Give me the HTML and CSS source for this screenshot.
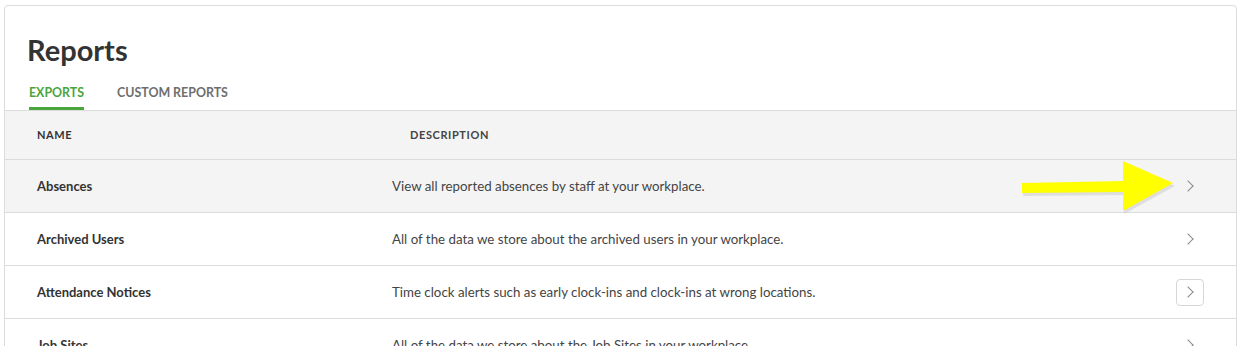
FILE: index.html
```html
<!DOCTYPE html>
<html>
<head>
<meta charset="UTF-8">
<title>Reports</title>
<link rel="stylesheet" href="styles.css">
</head>
<body>

	<div class="card">
		<div class="card-head">
			<h1 class="title">Reports</h1>
			<div class="tabs">
				<a class="tab active" href="#">Exports</a>
				<a class="tab" href="#">Custom Reports</a>
			</div>
		</div>

		<div class="table">
			<div class="row head">
				<div class="col-name">Name</div>
				<div class="col-desc">Description</div>
			</div>

			<div class="row hover">
				<div class="col-name">Absences</div>
				<div class="col-desc">View all reported absences by staff at your workplace.</div>
				<div class="col-go"><span class="chev"></span></div>
			</div>
			<div class="row">
				<div class="col-name">Archived Users</div>
				<div class="col-desc">All of the data we store about the archived users in your workplace.</div>
				<div class="col-go"><span class="chev"></span></div>
			</div>
			<div class="row">
				<div class="col-name">Attendance Notices</div>
				<div class="col-desc">Time clock alerts such as early clock-ins and clock-ins at wrong locations.</div>
				<div class="col-go"><span class="chev boxed"></span></div>
			</div>
			<div class="row">
				<div class="col-name">Job Sites</div>
				<div class="col-desc">All of the data we store about the Job Sites in your workplace.</div>
				<div class="col-go"><span class="chev"></span></div>
			</div>
		</div>
	</div>

	<!-- annotation arrow drawn over the first row -->
	<svg class="pointer" width="170" height="60" viewBox="0 0 170 60">
		<polygon points="3,23 104,21 104,1 155,23 104,51 104,32 3,33" fill="#cfcfcf" transform="translate(1,2)" opacity="0.6"/>
		<polygon points="3,22 104,20 104,0 154,22 104,50 104,31 3,32" fill="#ffff00"/>
	</svg>

</body>
</html>
```
FILE: styles.css
```css
body {
	margin: 0;
	padding: 5px 13px 0 4px;
	font-family: Lato, "Noto Sans", sans-serif;
	color: #333;
	background: #fff;
	overflow: hidden;
}

.card {
	border: 1px solid #dcdcdc;
	border-radius: 4px;
	background: #fff;
}

.card-head {
	padding: 0 22px;
}

.title {
	margin: 0;
	padding-top: 26px;
	font-size: 29px;
	font-weight: 700;
	color: #333;
	line-height: 35px;
}

.tabs {
	display: flex;
	gap: 33px;
	margin-top: 18px;
	padding-left: 2px;
}

.tab {
	font-size: 12.4px;
	font-weight: 700;
	text-transform: uppercase;
	color: #6e6e6e;
	text-decoration: none;
	padding-bottom: 7px;
	border-bottom: 3px solid transparent;
}

.tab.active {
	color: #4aa63c;
	border-bottom-color: #4aa63c;
}

.table {
	border-top: 1px solid #dcdcdc;
}

.row {
	display: flex;
	align-items: center;
	height: 52px;
	border-bottom: 1px solid #dcdcdc;
	font-size: 13px;
}

.row.head {
	height: 49px;
	padding-bottom: 2px;
	box-sizing: border-box;
	background: #f4f4f4;
	font-size: 11px;
	font-weight: 700;
	text-transform: uppercase;
	letter-spacing: 0.6px;
	color: #444;
}

.row.hover {
	background: #f4f4f4;
}

.col-name {
	width: 355px;
	padding-left: 32px;
	font-weight: 700;
	color: #333;
}

.col-desc {
	flex: 1;
	font-size: 13.3px;
	color: #444;
}

.head .col-desc {
	padding-left: 18px;
	font-size: 11px;
}

.col-go {
	display: flex;
	padding-right: 32px;
}

.chev {
	display: flex;
	align-items: center;
	justify-content: center;
	width: 26px;
	height: 25px;
	border: 1px solid transparent;
	border-radius: 4px;
}

.chev::before {
	content: "";
	width: 7px;
	height: 7px;
	border-right: 1.6px solid #8a8a8a;
	border-top: 1.6px solid #8a8a8a;
	transform: translate(-2px, 0) rotate(45deg);
}

.chev.boxed {
	border-color: #d6d6d6;
}

.pointer {
	position: absolute;
	left: 1019px;
	top: 161px;
}
```
